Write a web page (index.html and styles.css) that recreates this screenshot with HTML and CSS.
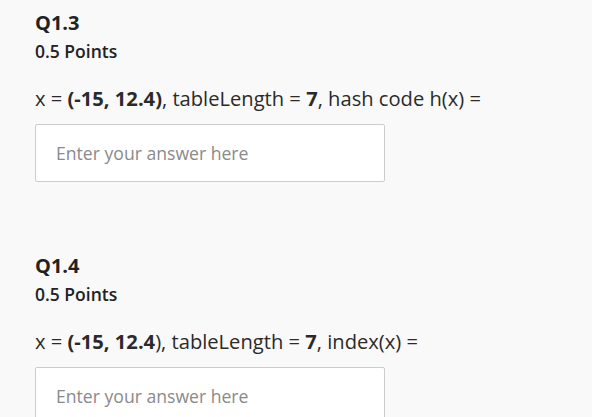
FILE: index.html
```html
<!DOCTYPE html>
<html>
<head>
<meta charset="utf-8">
<link rel="stylesheet" href="styles.css">
</head>
<body>
<main class="page">
  <section class="question">
    <h2 class="q-title">Q1.3</h2>
    <div class="q-points">0.5 Points</div>
    <p class="q-text">x = <b>(-15, 12.4)</b>, tableLength = <b>7</b>, hash code h(x) =</p>
    <input class="q-input" type="text" placeholder="Enter your answer here">
  </section>
  <section class="question">
    <h2 class="q-title">Q1.4</h2>
    <div class="q-points">0.5 Points</div>
    <p class="q-text">x = <b>(-15, 12.4</b>), tableLength = <b>7</b>, index(x) =</p>
    <input class="q-input" type="text" placeholder="Enter your answer here">
  </section>
</main>
</body>
</html>
```
FILE: styles.css
```css
html, body {
  margin: 0;
  padding: 0;
  background: #f9f9f9;
}
body {
  font-family: "Open Sans", "Liberation Sans", sans-serif;
  color: #222;
}
.page {
  padding: 9px 0 0 35px;
}
.question {
  margin-bottom: 70px;
}
.q-title {
  margin: 0;
  font-size: 20px;
  font-weight: 700;
  line-height: 27px;
}
.q-points {
  font-size: 17.5px;
  font-weight: 600;
  line-height: 23px;
  margin-top: 4px;
}
.q-text {
  margin: 21px 0 0 0;
  font-size: 20.15px;
  line-height: 28px;
  color: #2a2a2a;
}
.q-text b {
  font-weight: 700;
}
.q-input {
  display: block;
  box-sizing: border-box;
  margin-top: 12px;
  width: 350px;
  height: 58px;
  padding: 0 20px;
  border: 1px solid #cccccc;
  border-radius: 2px;
  background: #fff;
  font-family: "Open Sans", "Liberation Sans", sans-serif;
  font-size: 17.6px;
  color: #222;
  outline: none;
}
.q-input::placeholder {
  color: #8a8a8a;
}
```
